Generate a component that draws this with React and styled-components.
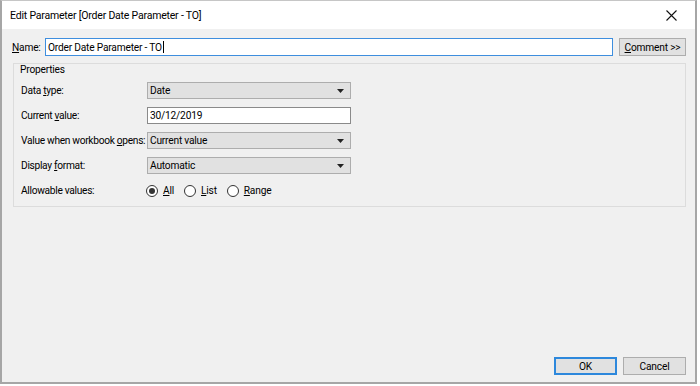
import React from 'react';
import styled, { createGlobalStyle } from 'styled-components';

const Global = createGlobalStyle`
  html, body { margin: 0; padding: 0; background: #fff; }
  body {
    font-family: Roboto, "Noto Sans", sans-serif;
    font-size: 10.2px;
    color: #000;
    letter-spacing: -0.2px;
    white-space: nowrap;
  }
  * { box-sizing: border-box; }
`;

const Window = styled.div`
  width: 697px;
  height: 384px;
  background: #f0f0f0;
  border: 2px solid #a6a6a6;
  border-top: 1px solid #c6c6c6;
  display: flex;
  flex-direction: column;
`;

const TitleBar = styled.div`
  height: 28px;
  flex: none;
  background: #fff;
  display: flex;
  align-items: center;
  justify-content: space-between;
  padding: 0 18px 0 8px;
  font-size: 10.5px;
`;

const CloseIcon = () => (
  <svg width="11" height="11" viewBox="0 0 11 11">
    <path d="M0.5 0.5 L10.5 10.5 M10.5 0.5 L0.5 10.5" stroke="#111" strokeWidth="1.1" fill="none" />
  </svg>
);

const Body = styled.div`
  flex: 1;
  display: flex;
  flex-direction: column;
  padding: 9px 9px 7px 10px;
`;

const NameRow = styled.div`
  display: flex;
  align-items: center;
  height: 18px;
`;

const NameLabel = styled.span`
  width: 33px;
  flex: none;
`;

const TextBox = styled.div`
  height: ${p => p.$h || 17}px;
  background: #fff;
  border: 1px solid ${p => (p.$focused ? '#3e8ede' : '#8a8a8a')};
  display: flex;
  align-items: center;
  padding-left: 2px;
  flex: ${p => (p.$grow ? 1 : 'none')};
`;

const Caret = styled.span`
  display: inline-block;
  width: 1px;
  height: 12px;
  background: #000;
  margin-left: 1px;
`;

const Button = styled.div`
  width: ${p => p.$w}px;
  height: ${p => p.$h}px;
  flex: none;
  background: #e1e1e1;
  border: ${p => (p.$default ? '2px solid #2d88dc' : '1px solid #adadad')};
  display: flex;
  align-items: center;
  justify-content: center;
  margin-left: ${p => p.$ml || 0}px;
`;

const GroupBox = styled.div`
  margin: 7px 0 0 1px;
  border: 1px solid #dcdcdc;
  padding: 0 8px 7px 7px;
`;

const Legend = styled.div`
  line-height: 12px;
  height: 12px;
  margin: 0 0 6px -1px;
`;

const Grid = styled.div`
  display: grid;
  grid-template-columns: 126px 204px;
  grid-auto-rows: 17px;
  row-gap: 8px;
  align-items: center;
`;

const RowLabel = styled.span`
  letter-spacing: -0.3px;
`;

const Dropdown = styled.div`
  height: 17px;
  background: #e1e1e1;
  border: 1px solid #adadad;
  display: flex;
  align-items: center;
  justify-content: space-between;
  padding: 0 6px 0 2px;
`;

const Arrow = () => (
  <svg width="7" height="4" viewBox="0 0 7 4">
    <path d="M0 0 H7 L3.5 4 Z" fill="#222" />
  </svg>
);

const RadioGroup = styled.div`
  display: flex;
  align-items: center;
  margin-left: -1px;
`;

const RadioItem = styled.div`
  display: flex;
  align-items: center;
  gap: 5px;
  margin-right: ${p => p.$mr}px;
`;

const Circle = styled.span`
  width: 12px;
  height: 12px;
  border-radius: 50%;
  border: 1px solid #333;
  background: #fff;
  display: flex;
  align-items: center;
  justify-content: center;
  &::after {
    content: '';
    display: ${p => (p.$on ? 'block' : 'none')};
    width: 6px;
    height: 6px;
    border-radius: 50%;
    background: #333;
  }
`;

const Spacer = styled.div`
  flex: 1;
`;

const ButtonRow = styled.div`
  display: flex;
  justify-content: flex-end;
`;

const rows = [
  { label: <>Data <u>t</u>ype:</>, kind: 'drop', value: 'Date' },
  { label: <>Current <u>v</u>alue:</>, kind: 'text', value: '30/12/2019' },
  { label: <>Value when workbook <u>o</u>pens:</>, kind: 'drop', value: 'Current value' },
  { label: <>Display <u>f</u>ormat:</>, kind: 'drop', value: 'Automatic' },
];

const radios = [
  { label: <><u>A</u>ll</>, on: true, mr: 10 },
  { label: <><u>L</u>ist</>, on: false, mr: 10 },
  { label: <><u>R</u>ange</>, on: false, mr: 0 },
];

export default function App() {
  return (
    <>
      <Global />
      <Window>
        <TitleBar>
          <span>Edit Parameter [Order Date Parameter - TO]</span>
          <CloseIcon />
        </TitleBar>
        <Body>
          <NameRow>
            <NameLabel><u>N</u>ame:</NameLabel>
            <TextBox $focused $grow $h={18}>
              Order Date Parameter - TO<Caret />
            </TextBox>
            <Button $w={67} $h={18} $ml={6}><u>C</u>omment &gt;&gt;</Button>
          </NameRow>
          <GroupBox>
            <Legend>Properties</Legend>
            <Grid>
              {rows.map((r, i) => (
                <React.Fragment key={i}>
                  <RowLabel>{r.label}</RowLabel>
                  {r.kind === 'drop' ? (
                    <Dropdown>
                      <span>{r.value}</span>
                      <Arrow />
                    </Dropdown>
                  ) : (
                    <TextBox>{r.value}</TextBox>
                  )}
                </React.Fragment>
              ))}
              <RowLabel>Allowable values:</RowLabel>
              <RadioGroup>
                {radios.map((r, i) => (
                  <RadioItem key={i} $mr={r.mr}>
                    <Circle $on={r.on} />
                    <span>{r.label}</span>
                  </RadioItem>
                ))}
              </RadioGroup>
            </Grid>
          </GroupBox>
          <Spacer />
          <ButtonRow>
            <Button $w={63} $h={18} $default>OK</Button>
            <Button $w={63} $h={18} $ml={6}>Cancel</Button>
          </ButtonRow>
        </Body>
      </Window>
    </>
  );
}
